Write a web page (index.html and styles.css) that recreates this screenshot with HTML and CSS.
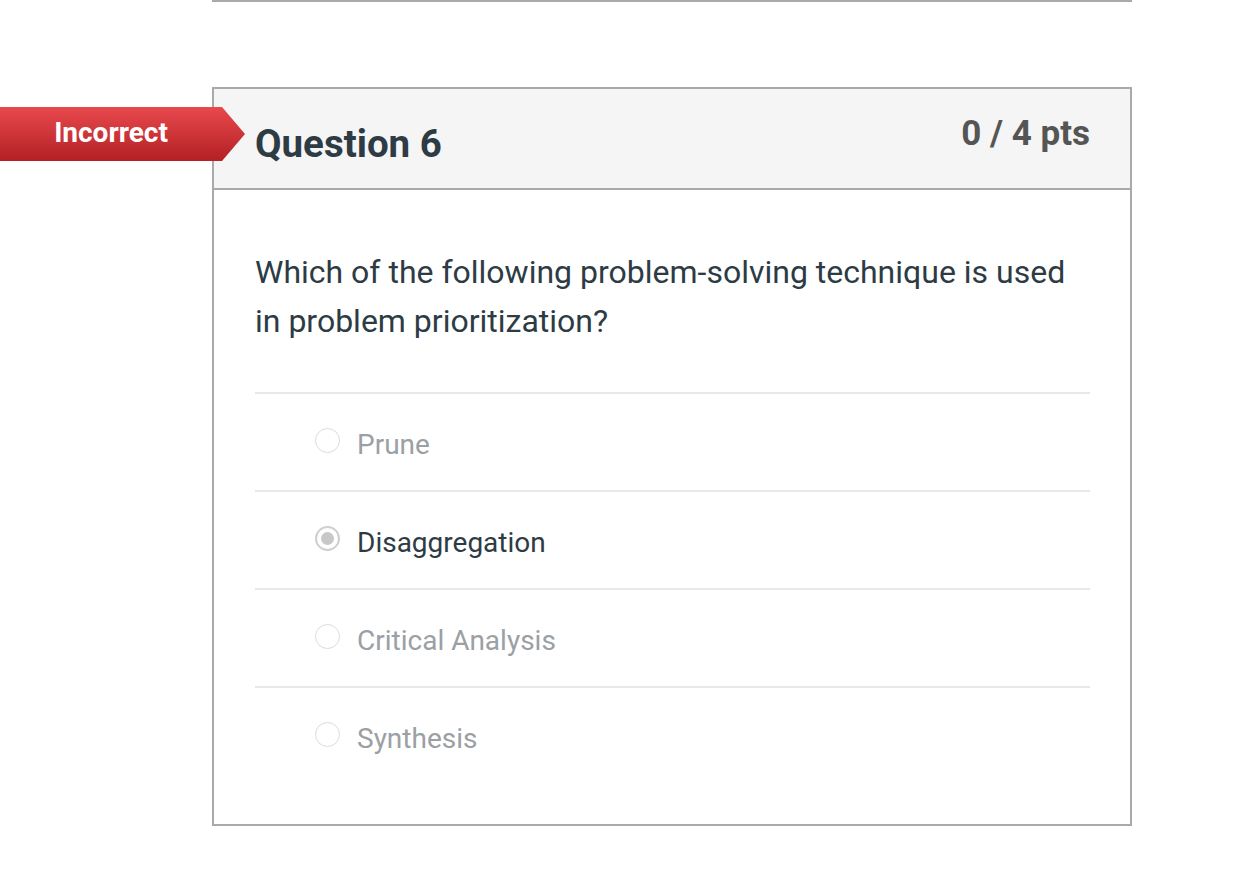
FILE: index.html
```html
<!DOCTYPE html>
<html>
<head>
<meta charset="utf-8">
<link rel="stylesheet" href="styles.css">
</head>
<body>
<div class="prev-card"></div>
<div class="card">
  <div class="banner"><span>Incorrect</span></div>
  <div class="card-header">
    <h2 class="q-title">Question 6</h2>
    <div class="q-pts">0 / 4 pts</div>
  </div>
  <div class="card-body">
    <p class="q-text">Which of the following problem-solving technique is used in problem prioritization?</p>
    <div class="answers">
      <div class="answer"><span class="radio"></span><span class="label muted">Prune</span></div>
      <div class="answer"><span class="radio checked"></span><span class="label">Disaggregation</span></div>
      <div class="answer"><span class="radio"></span><span class="label muted">Critical Analysis</span></div>
      <div class="answer"><span class="radio"></span><span class="label muted">Synthesis</span></div>
    </div>
  </div>
</div>
</body>
</html>
```

FILE: styles.css
```css
* { box-sizing: border-box; }
body {
  margin: 0;
  background: #fff;
  font-family: Roboto, "Liberation Sans", sans-serif;
  color: #2d3b45;
}
.prev-card {
  margin-left: 212px;
  width: 920px;
  height: 2px;
  border: 2px solid #a9a9a9;
  border-top: none;
}
.card {
  position: relative;
  margin-top: 85px;
  margin-left: 212px;
  width: 920px;
  border: 2px solid #a9a9a9;
  padding-bottom: 2px;
}
.banner {
  position: absolute;
  left: -214px;
  top: 18px;
  width: 245px;
  height: 54px;
  background: linear-gradient(#e8494d, #b32025);
  clip-path: polygon(0 0, 222px 0, 245px 50%, 222px 100%, 0 100%);
  display: flex;
  align-items: center;
}
.banner span {
  width: 222px;
  text-align: center;
  color: #fff;
  font-weight: 700;
  font-size: 28px;
  margin-top: -3px;
}
.card-header {
  background: #f5f5f5;
  border-bottom: 2px solid #a9a9a9;
  height: 101px;
  display: flex;
  justify-content: space-between;
  padding: 0 40px 0 41px;
}
.q-title {
  margin: 0;
  padding-top: 31px;
  font-size: 38.5px;
  line-height: 48px;
  font-weight: 700;
  color: #2d3b45;
}
.q-pts {
  padding-top: 23px;
  font-size: 35px;
  line-height: 44px;
  font-weight: 700;
  color: #555;
}
.card-body {
  padding: 58px 40px 38px 41px;
}
.q-text {
  margin: 0 0 46px;
  font-size: 32px;
  line-height: 49px;
  color: #2d3b45;
}
.answers {
  border-top: 2px solid #e8e8e8;
}
.answer {
  display: flex;
  align-items: center;
  height: 98px;
  padding-left: 60px;
  border-top: 2px solid #e8e8e8;
}
.answer:first-child { border-top: none; height: 96px; }
.radio {
  width: 25px;
  height: 25px;
  border: 1.5px solid #dcdcdc;
  border-radius: 50%;
  background: #fff;
  margin-right: 17px;
  margin-top: -4px;
  position: relative;
}
.radio.checked {
  border: 2px solid #cfcfcf;
}
.radio.checked::after {
  content: "";
  position: absolute;
  left: 4px;
  top: 4px;
  width: 13px;
  height: 13px;
  border-radius: 50%;
  background: #c8c8c8;
}
.label {
  font-size: 28px;
  line-height: 32px;
  margin-top: 6px;
  color: #2d3b45;
}
.label.muted { color: #9ba0a5; }
```
